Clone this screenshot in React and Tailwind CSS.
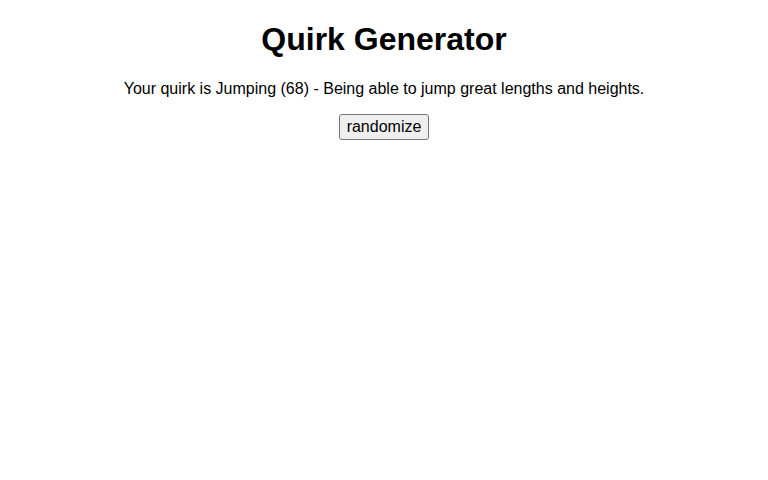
import React, { useState } from "react";

const quirks = [
  { name: "Jumping", id: 68, desc: "Being able to jump great lengths and heights." },
];

export default function App() {
  const [quirk, setQuirk] = useState(quirks[0]);

  const randomize = () => {
    setQuirk(quirks[Math.floor(Math.random() * quirks.length)]);
  };

  return (
    <div className="text-center text-black bg-white min-h-screen" style={{ fontFamily: '"Liberation Sans", Arial, sans-serif' }}>
      <h1 className="text-[32px] font-bold leading-[37px] pt-[21px] mb-[22px]">Quirk Generator</h1>
      <p className="text-base leading-[18px] mb-4">
        Your quirk is {quirk.name} ({quirk.id}) - {quirk.desc}
      </p>
      <button
        onClick={randomize}
        className="text-base leading-[18px] bg-[#efefef] border border-[#767676] rounded-[3px] px-[7px] py-[3px] text-black"
      >
        randomize
      </button>
    </div>
  );
}
